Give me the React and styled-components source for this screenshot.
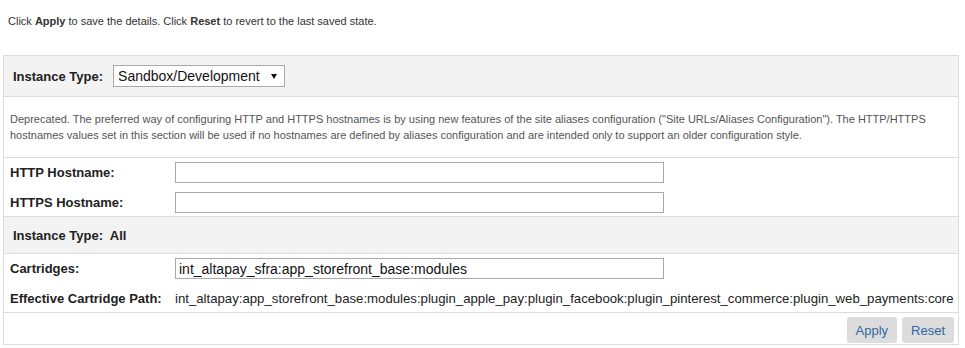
import React from 'react';
import styled, { createGlobalStyle } from 'styled-components';

const GlobalStyle = createGlobalStyle`
  html, body { margin: 0; padding: 0; background: #fff; }
  body { font-family: Arial, "Liberation Sans", Helvetica, sans-serif; color: #333; }
  * { box-sizing: border-box; }
`;

const Page = styled.div`
  padding: 14px 0 0 3px;
  width: 959px;
`;

const Intro = styled.p`
  margin: 0 0 27px 5px;
  font-size: 11px;
  line-height: 14px;
  color: #333;
  b { font-weight: bold; }
`;

const Panel = styled.div`
  width: 956px;
  border: 1px solid #dcdcdc;
`;

const GrayRow = styled.div`
  display: flex;
  align-items: center;
  height: ${(p) => p.$h}px;
  padding-left: 9px;
  background: #f3f3f3;
  border-bottom: 1px solid #dcdcdc;
  border-top: ${(p) => (p.$top ? '1px solid #dcdcdc' : 'none')};
  font-size: 13px;
  font-weight: bold;
  color: #222;
`;

const SelectWrap = styled.div`
  position: relative;
  margin-left: 10px;
  width: 172px;
  height: 22px;
`;

const Select = styled.select`
  appearance: none;
  -webkit-appearance: none;
  width: 100%;
  height: 100%;
  border: 1px solid #a6a9ad;
  border-radius: 0;
  background: #fff;
  padding: 0 0 0 4px;
  font-family: Arial, "Liberation Sans", sans-serif;
  font-size: 14px;
  color: #111;
  outline: none;
`;

const Arrow = styled.span`
  position: absolute;
  right: 8px;
  top: 9px;
  width: 0;
  height: 0;
  border-left: 3px solid transparent;
  border-right: 3px solid transparent;
  border-top: 5px solid #111;
  pointer-events: none;
`;

const Description = styled.div`
  display: flex;
  align-items: center;
  height: 61px;
  padding: 0 6px;
  font-size: 11px;
  line-height: 16px;
  color: #555;
  border-bottom: 1px solid #dcdcdc;
`;

const FieldGroup = styled.div`
  display: grid;
  grid-template-columns: 171px 1fr;
  grid-auto-rows: 21px;
  row-gap: 9px;
  align-items: center;
  padding: ${(p) => p.$pad};
`;

const Label = styled.label`
  padding-left: 6px;
  font-size: 13px;
  font-weight: bold;
  color: #222;
  white-space: nowrap;
`;

const TextInput = styled.input`
  width: 489px;
  height: 21px;
  border: 1px solid #a6a9ad;
  padding: 0 3px;
  font-family: Arial, "Liberation Sans", sans-serif;
  font-size: 14px;
  color: #111;
  outline: none;
`;

const Value = styled.span`
  font-size: 13.2px;
  color: #222;
  white-space: nowrap;
`;

const Footer = styled.div`
  display: flex;
  justify-content: flex-end;
  align-items: flex-start;
  gap: 5px;
  height: 32px;
  padding: 4px 4px 0 0;
  border-top: 1px solid #dcdcdc;
`;

const Button = styled.button`
  height: 26px;
  padding: 0 9px;
  border: none;
  border-radius: 3px;
  background: #dcdcdc;
  color: #2f68a0;
  font-family: Arial, "Liberation Sans", sans-serif;
  font-size: 13px;
  cursor: pointer;
`;

export default function App() {
  return (
    <>
      <GlobalStyle />
      <Page>
        <Intro>
          Click <b>Apply</b> to save the details. Click <b>Reset</b> to revert to the last saved state.
        </Intro>
        <Panel>
          <GrayRow $h={41}>
            Instance Type:
            <SelectWrap>
              <Select defaultValue="sandbox">
                <option value="sandbox">Sandbox/Development</option>
                <option value="staging">Staging</option>
                <option value="production">Production</option>
              </Select>
              <Arrow />
            </SelectWrap>
          </GrayRow>
          <Description>
            <div>
              Deprecated. The preferred way of configuring HTTP and HTTPS hostnames is by using new features of the site aliases configuration ("Site URLs/Aliases Configuration"). The HTTP/HTTPS
              <br />
              hostnames values set in this section will be used if no hostnames are defined by aliases configuration and are intended only to support an older configuration style.
            </div>
          </Description>
          <FieldGroup $pad="4px 0 3px">
            <Label>HTTP Hostname:</Label>
            <TextInput defaultValue="" />
            <Label>HTTPS Hostname:</Label>
            <TextInput defaultValue="" />
          </FieldGroup>
          <GrayRow $h={38} $top>
            Instance Type:&nbsp; All
          </GrayRow>
          <FieldGroup $pad="4px 0 3px">
            <Label>Cartridges:</Label>
            <TextInput defaultValue="int_altapay_sfra:app_storefront_base:modules" />
            <Label>Effective Cartridge Path:</Label>
            <Value>
              int_altapay:app_storefront_base:modules:plugin_apple_pay:plugin_facebook:plugin_pinterest_commerce:plugin_web_payments:core
            </Value>
          </FieldGroup>
          <Footer>
            <Button>Apply</Button>
            <Button>Reset</Button>
          </Footer>
        </Panel>
      </Page>
    </>
  );
}
